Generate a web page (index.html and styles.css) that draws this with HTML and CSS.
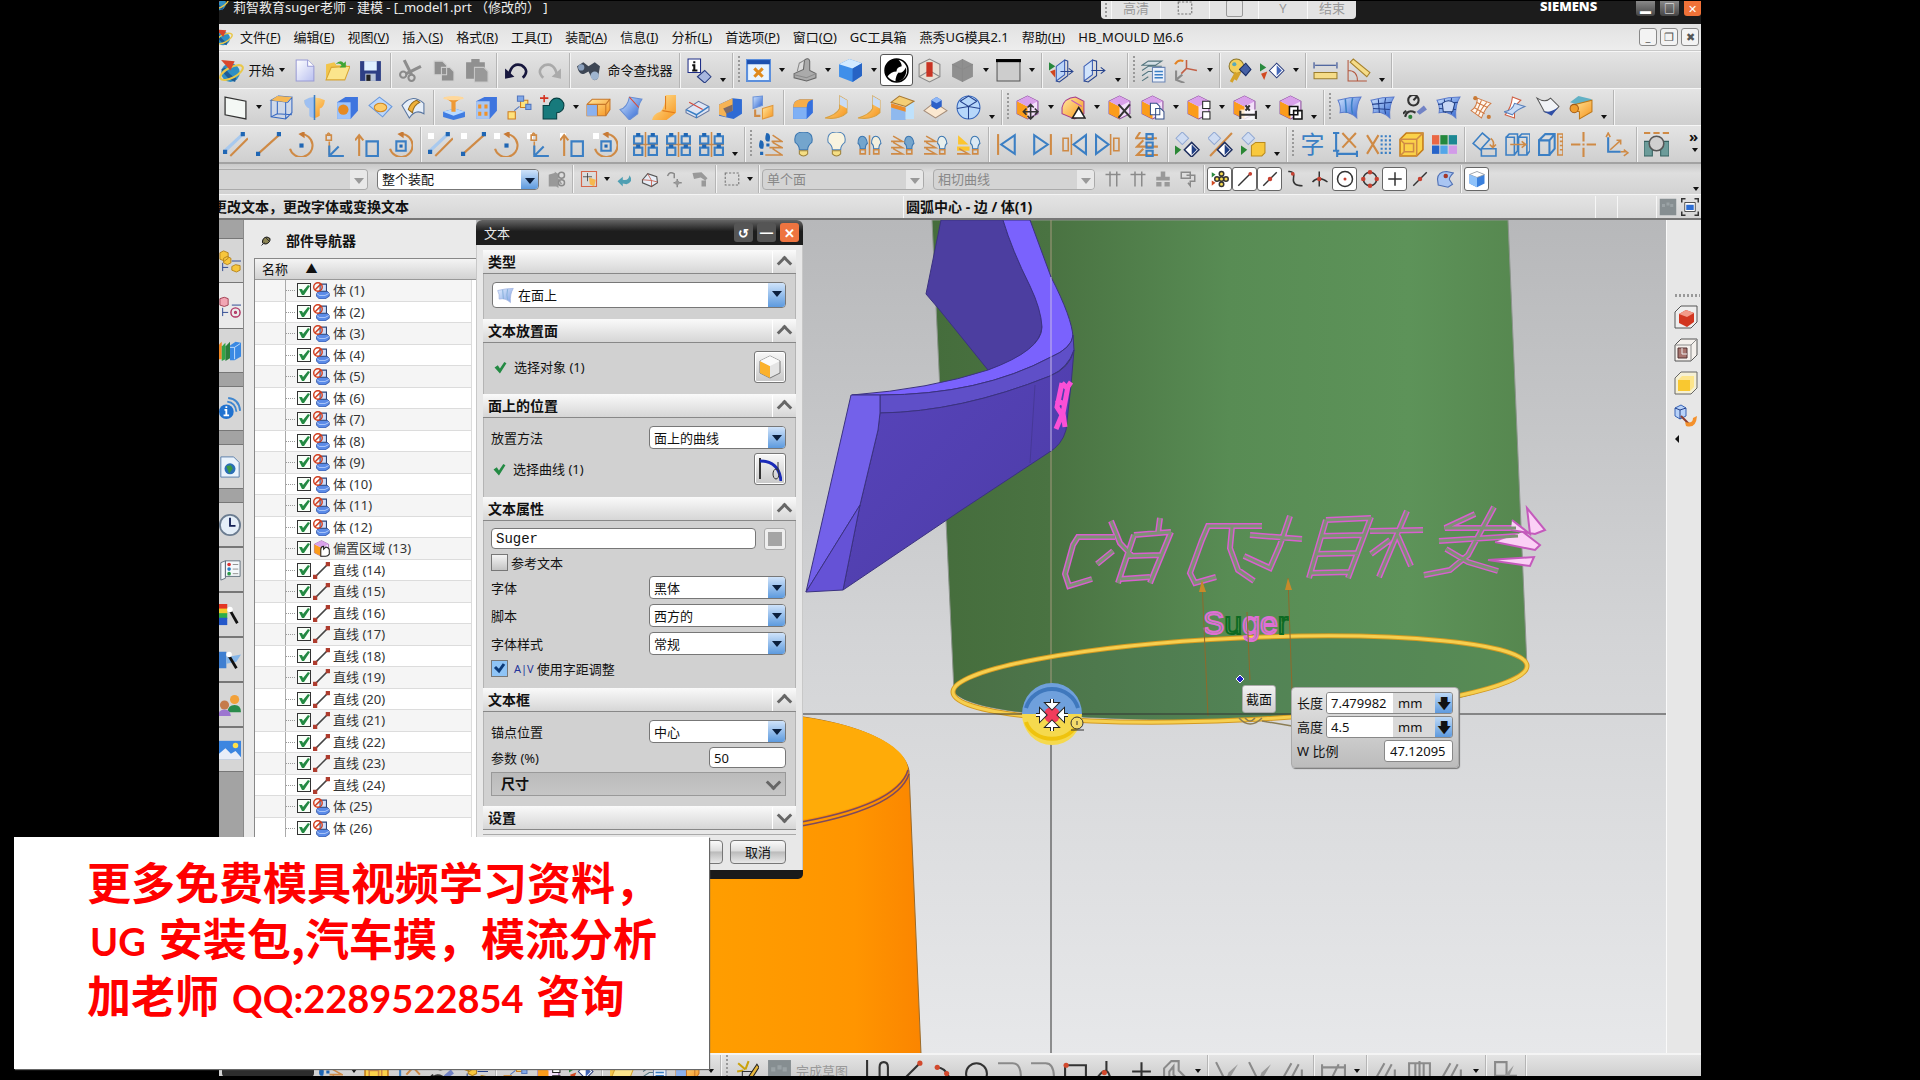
FILE: index.html
```html
<!DOCTYPE html>
<html lang="zh-CN">
<head>
<meta charset="utf-8">
<title>建模 - [_model1.prt]</title>
<link rel="stylesheet" href="styles.css">
</head>
<body>
<svg class="sprite" aria-hidden="true">
  <defs>
    <linearGradient id="gb" x1="0" y1="0" x2="1" y2="1"><stop offset="0" stop-color="#cfe4ff"/><stop offset="1" stop-color="#2a62d0"/></linearGradient>
    <linearGradient id="go" x1="0" y1="0" x2="1" y2="1"><stop offset="0" stop-color="#ffe9a0"/><stop offset="1" stop-color="#f7941d"/></linearGradient>
    <linearGradient id="gp" x1="0" y1="0" x2="1" y2="1"><stop offset="0" stop-color="#fff"/><stop offset="1" stop-color="#b9c0f0"/></linearGradient>
  </defs>
  <symbol id="nx" viewBox="0 0 24 24"><circle cx="11" cy="14" r="9" fill="#2f8fc4"/><path d="M4 10q5 9 12 11" stroke="#1d5c96" stroke-width="4" fill="none"/><ellipse cx="12" cy="14" rx="12" ry="5" transform="rotate(-28 12 14)" class="y"/><path d="M2 2l13 1-4 9z" fill="#d9452b"/></symbol>
  <symbol id="new" viewBox="0 0 24 24"><path d="M4 2h11l6 6v14H4z" fill="url(#gp)" stroke="#9a9cd6"/><path d="M15 2v6h6" fill="#fff" stroke="#9a9cd6"/></symbol>
  <symbol id="open" viewBox="0 0 24 24"><path d="M1 21V6l8-2 2 3h10v3z" fill="#f2c54a"/><path d="M1 21l5-12 18-1-5 13z" fill="#fbe58c" stroke="#d8a432"/><path d="M10 6q5-5 8-1l2-2v6h-6l2-2q-2-3-6-1z" fill="#3fa535"/></symbol>
  <symbol id="save" viewBox="0 0 24 24"><path d="M2 3h20v19H2z" fill="#2d3f85"/><path d="M6 3h12v9H6z" fill="#dff0ff"/><path d="M7 15h10v7H7z" fill="#b8c4d8"/><path d="M8 16h4v6H8z" fill="#222"/></symbol>
  <symbol id="cut" viewBox="0 0 24 24"><path d="M6 2l7 14M22 8L8 15" stroke="#8d8d8d" stroke-width="3"/><circle cx="5" cy="16" r="3" class="g w2"/><circle cx="13" cy="19" r="3" class="g w2"/></symbol>
  <symbol id="copy" viewBox="0 0 24 24"><path d="M3 3h8l4 4v9H3zM10 9h8l4 4v9H10z" fill="#8f8f8f" stroke="#cfcfcf"/></symbol>
  <symbol id="paste" viewBox="0 0 24 24"><path d="M2 4h5V1h8v3h5v16H2z" fill="#909090"/><path d="M10 9h9l4 4v10H10z" fill="#999" stroke="#c8c8c8"/></symbol>
  <symbol id="undo" viewBox="0 0 24 24"><path d="M5 15Q8 4 17 7q8 5 1 12" fill="none" stroke="#17173d" stroke-width="2.5"/><path d="M1 10v10l9-2z" fill="#17173d"/></symbol>
  <symbol id="redo" viewBox="0 0 24 24"><path d="M19 15Q16 4 7 7q-8 5-1 12" fill="none" stroke="#aaa" stroke-width="2.5"/><path d="M23 10v10l-9-2z" fill="#aaa"/></symbol>
  <symbol id="find" viewBox="0 0 24 24"><path d="M1 8l6-4 5 4 6-4 5 4-2 12q-4 3-6-1l-3-6-4 2q-5 2-7-7z" fill="#3d4654"/><circle cx="5" cy="9" r="3" fill="#8ba0bd"/><circle cx="18" cy="17" r="4" fill="#9fb5cf"/></symbol>
  <symbol id="info" viewBox="0 0 24 24"><path d="M1 1h12v13H1z" fill="#fff" stroke="#1d2c86"/><path d="M7 3v2M5 7h2v5M5 12h5" stroke="#111" stroke-width="2" fill="none"/><path d="M10 18l7-6 6 6-6 6z" fill="#a9b8df" stroke="#253a80"/></symbol>
  <symbol id="fit" viewBox="0 0 24 24"><path d="M1 2h22v20H1z" fill="#e8f3ff" stroke="#5c8fdc" stroke-width="2"/><path d="M1 2h22v4H1z" fill="#1d4fae"/><path d="M8 10l8 8M16 10l-8 8" stroke="#e08a1d" stroke-width="3"/></symbol>
  <symbol id="wire" viewBox="0 0 24 24"><path d="M2 15l9-4 1-9q4-3 5 1v9l6 3v4l-9 3-12-3z" fill="#aaa" stroke="#666"/><path d="M2 16l12 3 9-4M5 13l2-8 5-3" class="g"/></symbol>
  <symbol id="cube" viewBox="0 0 24 24"><path d="M1 6l10-5 12 4v12l-9 6L1 18z" fill="#3f8fea"/><path d="M1 6l10-5 12 4-9 5z" fill="#d3eaff"/><path d="M14 10l9-5v12l-9 6z" fill="#2763c4"/></symbol>
  <symbol id="graycube" viewBox="0 0 24 24"><path d="M2 6l10-5 10 5v12l-10 5-10-5z" fill="#8f8f8f"/><path d="M2 6l10 5 10-5M12 1v22" class="g"/></symbol>
  <symbol id="redbar" viewBox="0 0 24 24"><path d="M2 6l10-5 10 5v12l-10 5-10-5z" fill="#e6e0d4" stroke="#888"/><path d="M2 18l10-6 10 6" class="g"/><path d="M9 4h6v14H9z" fill="#c93421"/></symbol>
  <symbol id="shade" viewBox="0 0 24 24"><circle cx="12" cy="12" r="11" fill="#fff" stroke="#000" stroke-width="1.5"/><path d="M13 1A11 11 0 0 0 3 18q4-5 9-5 0-4 5-5 0-4-4-7zM11 23q0-6 3-9 4 1 7-5a11 11 0 0 1-10 14z"/></symbol>
  <symbol id="frame" viewBox="0 0 24 24"><path d="M1 2h22v20H1z" fill="#cdcdcd" stroke="#555"/><path d="M0 1h24v3H0z"/></symbol>
  <symbol id="sect" viewBox="0 0 24 24"><path d="M7 8l8-6v14l-8 6z" fill="#bcd6fa" stroke="#3b5db4"/><path d="M15 2l3 1v14l-8 6-3-1M11 13h11M19 10l4 3-4 3" class="bk"/><path d="M0 4l6 4-6 4z" fill="#27873d"/><path d="M1 13l5-2v8z" fill="#d2451e"/></symbol>
  <symbol id="sect2" viewBox="0 0 24 24"><path d="M2 8l8-6v14l-8 6z" fill="#d2e4fb" stroke="#3b5db4"/><path d="M10 2l4 1v14l-8 6-4-1M9 12h12M18 9l4 3-4 3" class="bk"/></symbol>
  <symbol id="layers" viewBox="0 0 24 24"><path d="M1 7l6-4h13l-6 4zM1 12l6-4h13M1 17l6-4h13M1 22l6-4" fill="#d5e0e6" stroke="#54757e"/><path d="M11 9h12v14H11z" fill="#e9f0fb" stroke="#6c86b5"/><path d="M13 13h8M13 16h8M13 19h8" class="b"/></symbol>
  <symbol id="csys" viewBox="0 0 24 24"><path d="M12 2v8l10 2M12 10l-5 5" stroke="#c25f45" fill="none" stroke-width="1.5"/><path d="M2 12v9l8 3M2 21l6-5" class="g w2"/><path d="M1 6q3-5 8-3" stroke="#e38324" stroke-width="2" fill="none"/></symbol>
  <symbol id="key" viewBox="0 0 24 24"><circle cx="9" cy="8" r="7" fill="#f3cf5c" stroke="#8d762a"/><circle cx="7" cy="6" r="2" fill="#58a9bc"/><path d="M9 14l-5 9M12 14l-4 7" stroke="#d5a32a" stroke-width="3"/><path d="M12 11l6-6 5 6-5 6z" fill="#4661a5" stroke="#182e67"/></symbol>
  <symbol id="disp" viewBox="0 0 24 24"><path d="M0 5l6 4-6 4z" fill="#298a3e"/><path d="M1 15l6-2-3 8z" fill="#d14a22"/><path d="M9 12l7-7 7 7-7 7z" fill="#fff" stroke="#26397b"/><path d="M16 7v10l5-5z" fill="#4468bb"/></symbol>
  <symbol id="ruler" viewBox="0 0 24 24"><path d="M1 14h22v6H1z" fill="#f5dc88" stroke="#9a7d2d"/><path d="M1 4v6M23 4v6M2 7h20" class="bk"/></symbol>
  <symbol id="angle" viewBox="0 0 24 24"><path d="M2 2v20h18M2 12q9 0 9 10" stroke="#b3563d" fill="none"/><path d="M4 4l3-3 16 13-3 4z" fill="#f5dc88" stroke="#a5812c"/></symbol>
  <symbol id="plane" viewBox="0 0 24 24"><path d="M2 2l20 4v17L2 19z" fill="#f4f8f5" stroke="#333" stroke-width="1.2"/></symbol>
  <symbol id="extr" viewBox="0 0 24 24"><path d="M2 5l7-4 13 1-4 5zM2 5v16l14 2 6-6V2M16 7v16M8 3v15l14 1M2 21l6-3" fill="#c5d8f8" fill-opacity=".5" stroke="#3567c0"/><path d="M2 5l6-4 14 1-5 5z" fill="#f7b955"/></symbol>
  <symbol id="rev" viewBox="0 0 24 24"><path d="M2 5q10-5 20 0-1 7-5 8v7q-5 4-9 0v-7q-6-2-6-8z" fill="url(#go)"/><path d="M2 5q5-3 10-3v20q-4 0-5-2v-7q-5-2-5-8z" fill="#9ec0f2"/><path d="M12 0v24" class="b"/></symbol>
  <symbol id="hole" viewBox="0 0 24 24"><path d="M2 7l8-5h12v13l-7 8H2z" fill="#3e75df"/><path d="M2 7h13v16H2z" fill="#9dc3fb"/><circle cx="8" cy="14" r="5" fill="#e58a23"/></symbol>
  <symbol id="face" viewBox="0 0 24 24"><path d="M1 10l10-8 12 9-9 10z" fill="#bcd7fb" stroke="#6b99db"/><ellipse cx="12" cy="12" rx="6" ry="4" fill="#fccb69" stroke="#d08722"/></symbol>
  <symbol id="thick" viewBox="0 0 24 24"><path d="M1 10Q10-2 22 8v10q-8-5-14 4z" fill="#e6eef8" stroke="#58749e"/><path d="M7 14q2-7 8-9l3 2q-6 3-7 10z" fill="#f0b13a" stroke="#91691d"/></symbol>
  <symbol id="boss" viewBox="0 0 24 24"><path d="M2 16l11-3 10 3v5l-11 3-10-3z" fill="#3f7ce2"/><path d="M2 16l11-3 10 3-11 4z" fill="#b9daff"/><path d="M3 2h18l-7 5v9h-4V7z" fill="#ee9936"/><ellipse cx="12" cy="3" rx="10" ry="2" fill="#ffd89b"/></symbol>
  <symbol id="pat" viewBox="0 0 24 24"><path d="M2 6l8-4h12v13l-7 8H2z" fill="#3e75df"/><path d="M2 6h13v17H2z" fill="#a9c6f1"/><path d="M4 9h3v4H4zM10 9h3v4h-3zM4 16h3v4H4zM10 16h3v4h-3z" fill="#f09229"/></symbol>
  <symbol id="parr" viewBox="0 0 24 24"><path d="M1 16h7v7H1zM13 5h7v7h-7z" fill="#ffe27c" stroke="#cd7c1e"/><path d="M7 15l5-4M10 1h6v5h-6zM18 9h5v5h-5z" fill="#80a8e8" stroke="#5477be"/></symbol>
  <symbol id="unite" viewBox="0 0 24 24"><path d="M3 10h6a7 7 0 1 1 7 7v6H3z" fill="#177a7c" stroke="#063f42"/><path d="M0 3h8M4 0v7" stroke="#d43220" stroke-width="1.5"/></symbol>
  <symbol id="box2" viewBox="0 0 24 24"><path d="M1 9l5-5h17v10l-4 6H1z" fill="url(#go)" stroke="#c7772a"/><path d="M1 9h10v11H1z" fill="#8bb1ee"/><path d="M19 9v11M1 9h18l4-5M11 9v11" stroke="#c7772a" fill="none"/></symbol>
  <symbol id="sheet" viewBox="0 0 24 24"><path d="M1 14q7-2 9-12l12 2q-4 6-4 14l-8 6z" fill="url(#gb)" stroke="#688ed3"/><path d="M10 2l9 10" stroke="#e0462d"/></symbol>
  <symbol id="drft" viewBox="0 0 24 24"><path d="M13 0h10v17l-9 7H0q1-6 8-8 5-4 5-16z" fill="url(#go)"/><path d="M10 15l12 2M13 1v13" stroke="#e07b1b" fill="none"/></symbol>
  <symbol id="slab" viewBox="0 0 24 24"><path d="M1 14l12-8 10 5v4l-12 7-10-5z" fill="#dfe6f5" stroke="#6376a1"/><path d="M1 14l10 5 12-8M11 19v3" class="b"/><path d="M4 7l13 7" stroke="#d4473a"/></symbol>
  <symbol id="open2" viewBox="0 0 24 24"><path d="M1 9l13-6 9 1v14l-8 5-14-3z" fill="#2f6bd4"/><path d="M1 9l13-6v12l-6 2v4l-7-2z" fill="#f5b355"/><path d="M5 13l9-4v6l-6 3z" fill="#7c6a68"/></symbol>
  <symbol id="move2" viewBox="0 0 24 24"><path d="M2 2l9-1v9l-9 3z" fill="url(#gb)" stroke="#6c93d8"/><path d="M11 13l10-3v10l-10 3z" fill="url(#go)" stroke="#e19739"/><path d="M4 14v6h5" class="o w2"/></symbol>
  <symbol id="blend" viewBox="0 0 24 24"><path d="M2 12q0-7 7-8h12v13l-6 6H2z" fill="#3570de"/><path d="M2 12q0-7 7-8h13q-7 1-7 8z" fill="#f7ad48"/><path d="M2 12h13v11H2z" fill="#7fb0f5"/></symbol>
  <symbol id="curl" viewBox="0 0 24 24"><path d="M15 1l7 4v12q-7 7-21 5 11-3 14-9z" fill="url(#go)" stroke="#d9a03f"/><path d="M15 1l7 4v8l-7-4z" fill="#c9dcf6"/></symbol>
  <symbol id="chamf" viewBox="0 0 24 24"><path d="M1 12h14v12H1z" fill="#8fb9ee"/><path d="M1 7l8-6 14 5v17h-8V12z" fill="#bfe1fb"/><path d="M1 7l8-6 14 5-8 5z" fill="#f4ce75" stroke="#a97832"/><path d="M1 8l14 4v4L1 12z" fill="#ed8c28"/></symbol>
  <symbol id="pyr" viewBox="0 0 24 24"><path d="M1 15l10-8 12 8-11 7z" fill="#fbe8d0" stroke="#a58d7a"/><path d="M8 5l5-3 5 3v6l-5 3-5-3z" fill="#2c60c8"/><path d="M8 5l5-3 5 3-5 3z" fill="#8fb8f7"/></symbol>
  <symbol id="gem" viewBox="0 0 24 24"><circle cx="12" cy="12" r="11" fill="#b7d7fa" stroke="#3364bb"/><path d="M4 6l8 5 8-5M12 11v12M1 13l11-2 11 2M4 6l8-5 8 5" class="bk"/></symbol>
  <symbol id="dcube" viewBox="0 0 24 24"><path d="M2 6l10-5 10 5v12l-10 5-10-5z" fill="#f3e0fa" stroke="#8a4a9c"/><path d="M2 6l10 5v12L2 18z" fill="#fb9c1b"/><path d="M2 6l10-5 10 5-10 5z" fill="#d9a1ea"/></symbol>
  <symbol id="d1" viewBox="0 0 24 24"><use href="#dcube"/><path d="M15 9v14M8 16h14M12 12l3-3 3 3M12 20l3 3 3-3M11 13l-3 3 3 3M19 13l3 3-3 3" stroke="#333" fill="none" stroke-width="1.5"/></symbol>
  <symbol id="d2" viewBox="0 0 24 24"><path d="M1 12Q3 3 14 2l8 4v12l-9 5-12-5z" fill="url(#go)" stroke="#a83d8a"/><path d="M10 5l10 6" stroke="#c15bb8"/><path d="M17 12l6 10H11z" fill="#fff" stroke="#222" stroke-width="1.5"/></symbol>
  <symbol id="d3" viewBox="0 0 24 24"><use href="#dcube"/><path d="M11 9l12 13M22 9L11 22" stroke="#333" stroke-width="2"/></symbol>
  <symbol id="d4" viewBox="0 0 24 24"><use href="#dcube"/><path d="M10 8h6l3 3v8h-9zM15 13h5l3 3v7h-8z" fill="#fff" stroke="#375189"/></symbol>
  <symbol id="d5" viewBox="0 0 24 24"><use href="#dcube"/><path d="M16 6h7v7h-7zM16 16h7v7h-7z" fill="#fff" stroke="#222"/></symbol>
  <symbol id="d6" viewBox="0 0 24 24"><use href="#dcube"/><path d="M8 14h15v10H8z" fill="#fff" fill-opacity=".8"/><path d="M8 15v8M23 15v8M9 19h13M13 10l4 5M17 10l-4 5" class="k w2"/></symbol>
  <symbol id="d7" viewBox="0 0 24 24"><use href="#dcube"/><path d="M11 11h8v8h-8zM15 15h8v8h-8z" fill="#fff" stroke="#111" stroke-width="1.5"/></symbol>
  <symbol id="surf" viewBox="0 0 24 24"><path d="M1 5q11-3 22-3-5 8-4 20-7-7-16-5 1-6-2-12z" fill="url(#gb)" stroke="#5d7ccc"/><path d="M8 4l1 13M15 3q-2 8 0 15" class="b"/></symbol>
  <symbol id="surf2" viewBox="0 0 24 24"><path d="M1 5q11-3 22-3-5 8-4 20-7-7-16-5 1-6-2-12z" fill="url(#gb)" stroke="#5d7ccc"/><path d="M8 4l1 13M15 3q-2 8 0 15M2 9l19-2M3 13l16 1" class="bk"/></symbol>
  <symbol id="tools" viewBox="0 0 24 24"><circle cx="10" cy="5" r="5" class="k w2"/><path d="M10 5l4-4M2 21q2-8 10-4M3 15l-3 3" class="k w2"/><path d="M13 16l7-6 3 4-7 5z" fill="#7283c5"/><circle cx="7" cy="21" r="2" fill="#2c813b"/></symbol>
  <symbol id="surf3" viewBox="0 0 24 24"><use href="#surf2"/><path d="M6 8q6-5 12 0l-2 8H7z" fill="#c8d8f5" stroke="#213f80"/></symbol>
  <symbol id="mesh" viewBox="0 0 24 24"><path d="M8 3l13 5q-6 5-9 14L2 15q6-4 6-12z" fill="#fff8ef" stroke="#d17b45"/><path d="M12 5Q8 15 6 18M17 7q-6 7-8 13M7 7l11 5M5 12l10 6" stroke="#d17b45" fill="none"/><circle cx="6" cy="3" r="2" class="fo"/><circle cx="19" cy="21" r="2" class="fo"/></symbol>
  <symbol id="fold" viewBox="0 0 24 24"><path d="M10 2l8 3q-7 5-6 17l-9-3Q9 12 10 2z" fill="#fff" stroke="#d05e42"/><path d="M2 16q8-1 10-8l10 3q-8 3-12 8z" fill="#cadcf5" stroke="#577fba"/></symbol>
  <symbol id="flag" viewBox="0 0 24 24"><path d="M2 3q8 5 13 0l8 8q-6 8-14 5z" fill="#f1f3f6" stroke="#555"/><path d="M7 15l9 5 6-8q-8 6-15 3z" fill="#304fa6"/></symbol>
  <symbol id="roll" viewBox="0 0 24 24"><path d="M2 7l8-6 13 3-8 7z" fill="#62b1c5"/><path d="M3 10l20-5v11l-12 7v-7l-6-1z" fill="url(#go)" stroke="#be7817"/><circle cx="6" cy="13" r="4" fill="#ef9e2f" stroke="#a45b15"/></symbol>
  <symbol id="l1" viewBox="0 0 24 24"><path d="M2 18L19 2" stroke="#a8c9ee" stroke-width="3"/><path d="M7 23L24 6" class="o w2"/><path d="M0 17h4v4H0zM17 0h4v4h-4z" class="fb"/></symbol>
  <symbol id="l2" viewBox="0 0 24 24"><path d="M2 21L22 3" class="o w2"/><path d="M0 19h4v4H0zM20 0h4v4h-4z" class="fb"/></symbol>
  <symbol id="l3" viewBox="0 0 24 24"><path d="M11 2a11 11 0 1 1-10 14" class="o w2"/><path d="M9 2l6-3v7z" class="fo"/><path d="M10 11h4v4h-4z" class="fb"/></symbol>
  <symbol id="l4" viewBox="0 0 24 24"><path d="M4 3h5v5H4zM5 3q1-4 3 0M7 9v13" class="o"/><path d="M7 13v10h14M7 23l9-9" class="b w2"/></symbol>
  <symbol id="l5" viewBox="0 0 24 24"><path d="M4 23V4M0 8l4-5 4 5" class="o w2"/><path d="M11 9h11v14H11z" class="b w2"/></symbol>
  <symbol id="l6" viewBox="0 0 24 24"><path d="M13 2a11 11 0 1 1-11 14" class="o w2"/><path d="M9 2l6-3v7z" class="fo"/><path d="M8 9h9v9H8z" class="b w2"/><path d="M11 12h3v3h-3z" class="fb"/></symbol>
  <symbol id="grid4" viewBox="0 0 24 24"><path d="M12 0v24M0 12h24" class="o"/><path d="M1 4h8v7H1zM15 4h8v7h-8zM1 15h8v7H1zM15 15h8v7h-8z" class="b w2"/><path d="M3 1h4v3H3zM17 1h4v3h-4zM3 12h4v3H3zM17 12h4v3h-4z" class="fb"/></symbol>
  <symbol id="steps" viewBox="0 0 24 24"><path d="M14 3l9 6H13M14 10l9 5H11M14 16l9 6H7" class="o"/><path d="M8 1q5 0 3 8-6 1-3-8zM2 8q5 0 3 8-6 1-3-8zM8 11h3v3H8zM2 19h3v3H2z" class="fb"/></symbol>
  <symbol id="bulb" viewBox="0 0 24 24"><path d="M8 17q0-4-4-7-2-10 8-10t8 10q-4 3-4 7z" fill="#74a5cd" stroke="#3b76b0"/><path d="M8 18h8v3q-4 4-8 0z" fill="#f5de84" stroke="#9c813a"/></symbol>
  <symbol id="bulbl" viewBox="0 0 24 24"><path d="M8 17q0-4-4-7-2-10 8-10t8 10q-4 3-4 7z" fill="#f8f3df" stroke="#4e82b8"/><path d="M8 18h8v3q-4 4-8 0z" fill="#f5de84" stroke="#9c813a"/></symbol>
  <symbol id="bulb2" viewBox="0 0 24 24"><path d="M3 16q0-4-2-5 0-7 4-7t5 7q-2 1-2 5z" fill="#74a5cd" stroke="#3b76b0"/><path d="M16 16q0-4-2-5 0-7 4-7t5 7q-2 1-2 5z" fill="#f3efdd" stroke="#3b76b0"/><path d="M12 3v19M3 17h5v4H3zM16 17h5v4h-5z" class="o"/></symbol>
  <symbol id="bulb3" viewBox="0 0 24 24"><path d="M16 16q0-4-2-5 0-7 4-7t5 7q-2 1-2 5z" fill="#74a5cd" stroke="#3b76b0"/><path d="M3 4l9 5H1M3 10l9 5H1M3 16l9 5H1M16 17h5v4h-5z" class="o"/></symbol>
  <symbol id="bulb4" viewBox="0 0 24 24"><path d="M16 16q0-4-2-5 0-7 4-7t5 7q-2 1-2 5z" fill="#e8f0ee" stroke="#3b76b0"/><path d="M3 4l9 5H1M3 10l9 5H1M3 16l9 5H1M16 17h5v4h-5z" class="o"/></symbol>
  <symbol id="bulb5" viewBox="0 0 24 24"><path d="M2 3l10 9H2M1 14h12v4H1z" fill="#fcc52f"/><path d="M16 16q0-4-2-5 0-7 4-7t5 7q-2 1-2 5z" fill="#dbe9f4" stroke="#3b76b0"/><path d="M3 16l9 5H1M16 17h5v4h-5z" class="o"/></symbol>
  <symbol id="first" viewBox="0 0 24 24"><path d="M2 2v20" class="o w2"/><path d="M18 3v18L5 12z" class="b w2"/></symbol>
  <symbol id="last" viewBox="0 0 24 24"><path d="M21 2v20" class="o w2"/><path d="M5 3v18l13-9z" class="b w2"/></symbol>
  <symbol id="pfirst" viewBox="0 0 24 24"><path d="M1 6h5v12H1zM9 2v20" class="o"/><path d="M23 3v18l-12-9z" class="b w2"/></symbol>
  <symbol id="plast" viewBox="0 0 24 24"><path d="M18 6h5v12h-5zM15 2v20" class="o"/><path d="M1 3v18l12-9z" class="b w2"/></symbol>
  <symbol id="order" viewBox="0 0 24 24"><path d="M5 0L1 6h20M8 8l-6 6h20M8 16l-6 6h20" class="o w2"/><path d="M11 2h6v5h-6zM11 10h6v5h-6zM11 18h6v5h-6z" class="b w2"/></symbol>
  <symbol id="dia1" viewBox="0 0 24 24"><path d="M1 6l6-6 6 6-6 6z" fill="#cfdcf2" stroke="#8fa7d2"/><path d="M0 13l6 4-6 5z" fill="#2b8735"/><path d="M9 17l7-7 7 7-7 7z" fill="#fff" stroke="#203060" stroke-width="1.5"/><path d="M16 12v10l5-5z" fill="#203e84"/></symbol>
  <symbol id="dia2" viewBox="0 0 24 24"><path d="M0 6l6-6 6 6-6 6z" fill="#cfdcf2" stroke="#8fa7d2"/><path d="M2 23L23 1" class="o w2"/><path d="M9 17l7-7 7 7-7 7z" fill="#fff" stroke="#203060" stroke-width="1.5"/><path d="M16 12v10l5-5z" fill="#203e84"/></symbol>
  <symbol id="dia3" viewBox="0 0 24 24"><path d="M1 6l6-6 6 6-6 6z" fill="#cfdcf2" stroke="#8fa7d2"/><path d="M0 13l6 4-6 5z" fill="#2b8735"/><path d="M10 13l4-3h9v10l-3 3H10z" fill="#f8c83d" stroke="#b98a1c"/></symbol>
  <symbol id="dimx" viewBox="0 0 24 24"><path d="M9 1l13 14M22 1L9 15" class="o w2"/><path d="M3 1v17M0 1h6M0 18h6M4 21h20M4 18v6M23 18v6" class="b w2"/></symbol>
  <symbol id="xbar" viewBox="0 0 24 24"><path d="M1 3l11 18M12 3L1 21" class="o w2"/><path d="M15 3v18M19 3v18M23 3v18" class="b w2" stroke-dasharray="2 2"/></symbol>
  <symbol id="ybox" viewBox="0 0 24 24"><path d="M1 7l6-6h16v16l-6 6H1z" fill="#fbd24a" stroke="#c57c18" stroke-width="1.5"/><path d="M1 7h16v16M17 7l6-6M5 11h9v8H5zM1 7l4 4M1 23l4-4" class="o"/></symbol>
  <symbol id="pal" viewBox="0 0 24 24"><path d="M0 3h7v9H0z" fill="#ea6744"/><path d="M8 3h7v9H8z" fill="#24883d"/><path d="M16 3h8v9h-8z" fill="#1c8893"/><path d="M0 13h7v8H0z" fill="#2864c9"/><path d="M8 13h7v8H8z" fill="#53a6e8"/><path d="M16 13h8v8h-8z" fill="#d29be8"/></symbol>
  <symbol id="rot" viewBox="0 0 24 24"><path d="M1 11l9-10 7 6-9 10zM9 16h14v7H9z" class="b"/><path d="M18 6q4 3 2 8M17 12l3 3 3-3" class="o"/></symbol>
  <symbol id="cc" viewBox="0 0 24 24"><path d="M1 5h8v17H1zM1 5l3-3h8v16l-3 4M13 5h8v17h-8zM13 5l3-3h8v16l-3 4" class="b"/><path d="M5 12h14M16 9l4 3-4 3" class="o"/></symbol>
  <symbol id="cr" viewBox="0 0 24 24"><path d="M1 8h10v14H1zM1 8l6-6h9v14l-5 6M11 8l5-6" class="b w2"/><path d="M19 2h5v20h-5zM21 5h3M21 9h3M21 13h3M21 17h3" class="o"/></symbol>
  <symbol id="cross" viewBox="0 0 24 24"><path d="M12 0v9M12 15v9M0 12h9M15 12h9M11 12h2" class="o w2"/></symbol>
  <symbol id="axes" viewBox="0 0 24 24"><path d="M4 5v14h12" class="b w2"/><path d="M2 5l2-4 2 4M19 17l4 3-4 3M16 19h6M6 17l10-9M12 8h4v4" class="o"/></symbol>
  <symbol id="ring" viewBox="0 0 24 24"><path d="M0 9h8v14H0zM16 9h8v14h-8z" fill="#6c9c9a" stroke="#34605f"/><circle cx="12" cy="11" r="7" fill="#cfcfcf" stroke="#555" stroke-width="1.5"/><path d="M0 1h6M9 1h6M18 1h6" class="o w2"/></symbol>
  <symbol id="snapx" viewBox="0 0 24 24"><path d="M2 2h20v20H2z" fill="none" stroke="#d6664a" stroke-width="1.5"/><path d="M10 4v11M4 9h12" class="k"/><path d="M12 10l9 3-2 9-6-3z" fill="#f6b84f"/></symbol>
  <symbol id="back" viewBox="0 0 24 24"><path d="M2 15l7-6v4q8 2 9-6 6 8-4 12l-5-1v4z" fill="#4f9fb3"/></symbol>
  <symbol id="house" viewBox="0 0 24 24"><path d="M2 13l7-8 12 4 1 8-8 5-12-5z" fill="#e7edf6" stroke="#555" stroke-width="1.5"/><path d="M9 5l5 9 8 2M2 13l12 1v8" stroke="#c14b37" fill="none"/></symbol>
  <symbol id="gtool" viewBox="0 0 24 24"><path d="M2 8q3-7 9-3v6M15 12v11M10 17h11" class="g w2"/><circle cx="15" cy="17" r="3" fill="#999"/></symbol>
  <symbol id="gham" viewBox="0 0 24 24"><path d="M2 4l12-1 8 8-3 3-6-4-9 2zM14 14h6v8h-6z" fill="#999"/></symbol>
  <symbol id="dash" viewBox="0 0 24 24"><path d="M3 4h18v16H3z" fill="none" stroke="#777" stroke-width="1.5" stroke-dasharray="3 2"/></symbol>
  <symbol id="gwrench" viewBox="0 0 24 24"><path d="M2 7l7-2v16H2zM10 4l3 2v16l-3-2zM14 12l4 7" fill="#999" stroke="#999" stroke-width="2"/><circle cx="18" cy="7" r="4" class="g w2"/><circle cx="18" cy="17" r="4" class="g w2"/></symbol>
  <symbol id="hh" viewBox="0 0 24 24"><path d="M2 6h20M8 2v20M17 2v20" class="g w2"/></symbol>
  <symbol id="stamp" viewBox="0 0 24 24"><path d="M9 2h6v7h6v5H3V9h6zM3 16h7v6H3zM14 16h7v6h-7z" fill="#999"/></symbol>
  <symbol id="gdown" viewBox="0 0 24 24"><path d="M3 3h12v8H3zM10 7h11v8h-6v6l-3-4" class="g w2"/></symbol>
  <symbol id="flow" viewBox="0 0 24 24"><path d="M1 3l5 3-5 4z" fill="#298a3e"/><path d="M1 14l5 3-5 4z" fill="#d14a22"/><g fill="#f7dc4f" stroke="#333" stroke-width="2"><circle cx="14" cy="12" r="3"/><circle cx="14" cy="5" r="3"/><circle cx="14" cy="19" r="3"/><circle cx="8" cy="12" r="3"/><circle cx="20" cy="12" r="3"/></g></symbol>
  <symbol id="seg" viewBox="0 0 24 24"><path d="M3 21L20 4" class="k w2"/><circle cx="19" cy="5" r="2.500" fill="#c64131"/></symbol>
  <symbol id="mid" viewBox="0 0 24 24"><path d="M3 21L21 3" class="k w2"/><circle cx="12" cy="12" r="3" fill="#c64131"/></symbol>
  <symbol id="scurve" viewBox="0 0 24 24"><path d="M3 2q9-1 7 9t12 10" class="k w2"/><circle cx="9" cy="5" r="2.500" fill="#c64131"/></symbol>
  <symbol id="tee" viewBox="0 0 24 24"><path d="M2 16q8-9 20 0M11 2v20" class="k w2"/><circle cx="11" cy="12" r="3" fill="#c64131"/></symbol>
  <symbol id="ccen" viewBox="0 0 24 24"><circle cx="12" cy="12" r="10" class="k w2"/><circle cx="12" cy="12" r="2" fill="#c64131"/></symbol>
  <symbol id="cq" viewBox="0 0 24 24"><circle cx="12" cy="12" r="9" class="k w2"/><g fill="#c64131"><circle cx="12" cy="3" r="3"/><circle cx="12" cy="21" r="3"/><circle cx="3" cy="12" r="3"/><circle cx="21" cy="12" r="3"/></g></symbol>
  <symbol id="plus" viewBox="0 0 24 24"><path d="M12 3v18M3 12h18" class="k w2"/></symbol>
  <symbol id="psurf" viewBox="0 0 24 24"><path d="M2 12Q3 2 14 2l9 2q-6 6-5 9l4 6-6 4-13-3z" fill="#a9c5f2" stroke="#5071b5" stroke-width="1.5"/><circle cx="13" cy="8" r="3" fill="#a63829"/></symbol>
  <symbol id="pcube" viewBox="0 0 24 24"><path d="M2 6l10-4 10 4v12l-10 5-10-5z" fill="#3a80dd"/><path d="M2 6l10-4 10 4-10 4z" fill="#fff" stroke="#999"/><path d="M2 6l10 4v13L2 18z" fill="#8ec2fa"/></symbol>
  <symbol id="gbox" viewBox="0 0 24 24"><path d="M1 1h22v22H1z" fill="#868e91"/><path d="M4 8h4v4H4zM10 6h4v4h-4zM15 8h4v4h-4z" fill="#9aa2a5"/></symbol>
  <symbol id="full" viewBox="0 0 24 24"><path d="M1 6V1h5M18 1h5v5M23 18v5h-5M6 23H1v-5" class="k w2"/><path d="M5 6h14v12H5z" fill="#fff" stroke="#222"/><path d="M7 9h10v7H7z" fill="#2e6ed3"/></symbol>
  <symbol id="body" viewBox="0 0 24 24"><path d="M5 16l5-4h9l4 4v4l-6 4H9l-4-4z" fill="#5b8be8" stroke="#244596"/><path d="M5 16l4 3h8l6-3" stroke="#cfe0ff" fill="none"/><path d="M10 3h9v10h-9z" fill="#cfdffc" stroke="#2d4475" stroke-width="1.500"/><circle cx="7" cy="7" r="6" fill="none" stroke="#d13b1c" stroke-width="2"/><path d="M3 11l8-8" stroke="#d13b1c" stroke-width="2"/></symbol>
  <symbol id="region" viewBox="0 0 24 24"><use href="#dcube"/><path d="M11 14q0-5 4-5v4l3-3q5 1 5 4v6q-2 3-5 3h-7z" fill="#fff" stroke="#222" stroke-width="1.500"/></symbol>
  <symbol id="line" viewBox="0 0 24 24"><path d="M3 21L21 3" stroke="#444" stroke-width="2"/><path d="M0 18h6v6H0zM18 0h6v6h-6z" fill="#ae3c2e"/></symbol>
  <symbol id="pin" viewBox="0 0 24 24"><path d="M5 14q0-9 9-10l6 3q1 8-8 11l-6-1z" fill="#8c8554" stroke="#111" stroke-width="2"/><path d="M3 21l6-6M12 6l6 6" class="k w2"/></symbol>
  <symbol id="t1" viewBox="0 0 24 24"><path d="M1 3l4-2 5 2v6l-4 3-5-2zM5 9l4-2 4 2v5l-4 2-4-2zM14 18l4-2 5 1v5l-4 2-5-2z" fill="#f7c63c" stroke="#b5821d"/><path d="M4 14v9M4 19h6M14 12h10" class="bk"/></symbol>
  <symbol id="t2" viewBox="0 0 24 24"><path d="M1 4q5-3 9 0v7q-4 3-9 0z" fill="#f2a6b4" stroke="#9c3d50"/><path d="M4 14v9M4 19h6M14 11h10" class="bk"/><circle cx="18" cy="19" r="5" class="m"/><circle cx="18" cy="19" r="1" class="m"/></symbol>
  <symbol id="t3" viewBox="0 0 24 24"><path d="M0 5l3-3v19H0z" fill="#f08a28"/><path d="M3 7l4-4v18l-4 2z" fill="#34a447"/><path d="M7 7l5-5v18l-5 3z" fill="#2b7f3c"/><path d="M12 6l6-4 6 1v15l-7 4h-5z" fill="#3a89e3"/><path d="M12 8h5l6-4M17 8v13" stroke="#c8e2ff" fill="none"/></symbol>
  <symbol id="t4" viewBox="0 0 24 24"><circle cx="8" cy="15" r="8" fill="#2172cf"/><path d="M8 9v2M6 13h2v6M5 19h6" stroke="#fff" stroke-width="2" fill="none"/><path d="M9 4q9 1 10 11M10 0q12 1 13 14" stroke="#3f86cf" stroke-width="2" fill="none"/></symbol>
  <symbol id="t5" viewBox="0 0 24 24"><path d="M2 1h14l6 6v16H2z" fill="#eaf3fc" stroke="#547ba8"/><circle cx="12" cy="14" r="6" fill="#2a6fb6"/><path d="M8 11l5-1 2 4-4 5z" fill="#3a9a43"/></symbol>
  <symbol id="t6" viewBox="0 0 24 24"><circle cx="12" cy="12" r="11" fill="#e4eef8" stroke="#6b7c90" stroke-width="2"/><path d="M12 4v9h6" stroke="#111f55" stroke-width="2" fill="none"/></symbol>
  <symbol id="t7" viewBox="0 0 24 24"><path d="M2 4l5-2v19l-5 2zM7 2h16v17H7z" fill="#f4f8fb" stroke="#5f6e7c"/><circle cx="11" cy="6" r="2" fill="#d33"/><circle cx="11" cy="11" r="2" fill="#2a7ec4"/><circle cx="11" cy="16" r="2" fill="#2a9a4a"/><path d="M15 6h6M15 11h6M15 16h6" class="g"/></symbol>
  <symbol id="t8" viewBox="0 0 24 24"><path d="M0 0h9v6H0z" fill="#e33524"/><path d="M0 5h9v6H0z" fill="#f3cc2c"/><path d="M0 10h9v6H0z" fill="#2eae49"/><path d="M0 15h9v8H0z" fill="#2458ca"/><path d="M11 5l9 16" stroke="#111" stroke-width="3"/><circle cx="12" cy="6" r="3" fill="#fff"/></symbol>
  <symbol id="t9" viewBox="0 0 24 24"><path d="M0 3h8v18H0z" fill="#3f7fd1"/><path d="M8 9l16-3-5 8-11 2z" fill="#86b6e8"/><path d="M10 6l9 15" stroke="#111" stroke-width="3"/><circle cx="11" cy="6" r="3" fill="#fff"/></symbol>
  <symbol id="t10" viewBox="0 0 24 24"><circle cx="17" cy="6" r="5" fill="#f2a13a"/><path d="M9 20q1-8 8-8t7 8z" fill="#2a8b4b"/><circle cx="6" cy="12" r="5" fill="#c57b4b"/><path d="M-1 24q1-7 7-7t7 7z" fill="#9c76d0"/></symbol>
  <symbol id="t11" viewBox="0 0 24 24"><path d="M0 2h24v20H0z" fill="#3c86e0"/><circle cx="18" cy="7" r="3" fill="#ffe14a"/><path d="M0 22v-6l7-6 6 6 5-3 6 7v2z" fill="#e9eef8"/></symbol>
  <symbol id="r1" viewBox="0 0 24 24"><path d="M1 7l6-6h16v16l-6 6H1z" fill="#eee" stroke="#555"/><path d="M5 9l7-4 8 3v9l-7 5-8-4z" fill="#d23620"/><path d="M5 9l7-4 8 3-7 4z" fill="#f29a88"/></symbol>
  <symbol id="r2" viewBox="0 0 24 24"><path d="M1 7l6-6h16v16l-6 6H1z" fill="#f4f0ec" stroke="#555"/><path d="M1 7h16v16M17 7l6-6" class="g"/><path d="M4 10h9v10H4z" fill="#a8756e" stroke="#533"/><path d="M8 10v6h5" stroke="#eee" fill="none"/></symbol>
  <symbol id="r3" viewBox="0 0 24 24"><path d="M1 7l6-6h16v16l-6 6H1z" fill="#f5f0d5" stroke="#666"/><path d="M4 9h12v11H4z" fill="#f9c830"/><path d="M4 9l4-4h12l-4 4zM16 9l4-4v11l-4 4z" fill="#fde58c"/></symbol>
  <symbol id="r4" viewBox="0 0 24 24"><path d="M1 4l6-3 5 3v8l-6 3-5-3z" fill="#b8d2f8" stroke="#3863b5"/><path d="M1 4l5 2 6-2M6 6v9" class="bk"/><path d="M7 12l8 8" stroke="#8b3d2e" stroke-width="2"/><path d="M12 22q10 3 11-10l-4 2q0 6-8 4z" fill="#f4912c"/></symbol>
  <symbol id="facebtn" viewBox="0 0 24 24"><path d="M2 6l10-5 10 5v12l-10 5-10-5z" fill="#e4e4e4" stroke="#777"/><path d="M2 6l10 5v12L2 18z" fill="#fbb12b"/><path d="M2 6l10-5 10 5-10 5z" fill="#fafafa"/></symbol>
  <symbol id="curvebtn" viewBox="0 0 24 24"><path d="M2 1v21" class="k w2"/><path d="M2 4q19 0 21 20" fill="none" stroke="#1a2bb8" stroke-width="3"/><ellipse cx="18" cy="17" rx="3" ry="5" class="k"/><path d="M20 5v9" class="k"/></symbol>
  <symbol id="tick" viewBox="0 0 24 24"><path d="M1 12l6-4 4 6L19 2l4 2-12 19z" fill="#238a43"/></symbol>
  <symbol id="sk" viewBox="0 0 24 24"><path d="M4 4l7 6M3 12l6-1M14 2l-3 8" stroke="#caa20d" stroke-width="2"/><path d="M8 12h10v11H8z" class="k"/><path d="M22 5l-8 12-2 5 5-3 7-11z" fill="#e8b73b" stroke="#222"/></symbol>
  <symbol id="s1" viewBox="0 0 24 24"><path d="M2 1v22M14 23V8q0-5 4-5t4 5v15" class="k w2"/><path d="M0 18h4v5H0zM12 18h4v5h-4z" fill="#c8442c"/></symbol>
  <symbol id="s2" viewBox="0 0 24 24"><path d="M3 22L20 5" class="k w2"/><circle cx="21" cy="4" r="2.500" fill="#d2492d"/></symbol>
  <symbol id="s3" viewBox="0 0 24 24"><path d="M6 8q10 1 13 15" class="k w2"/><circle cx="6" cy="8" r="2.500" fill="#d2492d"/><circle cx="15" cy="14" r="2.500" fill="#d2492d"/></symbol>
  <symbol id="s4" viewBox="0 0 24 24"><circle cx="12" cy="14" r="10" class="k w2"/></symbol>
  <symbol id="s5" viewBox="0 0 24 24"><path d="M1 4h14q8 0 8 14v6" class="g w2"/></symbol>
  <symbol id="s6" viewBox="0 0 24 24"><path d="M2 6h20v17H2z" class="k w2"/><circle cx="3" cy="6" r="2.500" fill="#d2492d"/></symbol>
  <symbol id="s7" viewBox="0 0 24 24"><path d="M2 17q8-11 11-1t10 1M10 2v9" class="k w2"/><circle cx="8" cy="13" r="2.500" fill="#d2492d"/><circle cx="15" cy="20" r="2.500" fill="#d2492d"/></symbol>
  <symbol id="s8" viewBox="0 0 24 24"><path d="M2 24V9l7-7h7v9l7 7v6M7 24V12l4-5v8l5 5v4" class="g w2"/></symbol>
  <symbol id="s9" viewBox="0 0 24 24"><path d="M1 3l9 18h4" class="g w2"/><path d="M22 5l-7 12-5 4 3-8z" fill="#999"/></symbol>
  <symbol id="s10" viewBox="0 0 24 24"><path d="M1 5v14M23 5v14M1 8h22M17 5l-9 18" class="g w2"/></symbol>
  <symbol id="s11" viewBox="0 0 24 24"><path d="M1 20L10 4M8 22l9-17M20 10v12" class="g w2"/></symbol>
  <symbol id="s12" viewBox="0 0 24 24"><path d="M2 24V4h20v20M8 4v14h8V4M12 2v16" class="g w2"/></symbol>
  <symbol id="s13" viewBox="0 0 24 24"><path d="M2 3h11v13H2zM10 16h12v8H10z" class="g w2"/><path d="M20 6l-6 14-3-4z" fill="#999"/></symbol>
</svg>

<div class="app">
  <header class="titlebar">
    <svg class="i18"><use href="#nx"/></svg>
    <h1>莉智教育suger老师 - 建模 - [_model1.prt （修改的）&nbsp;]</h1>
    <div class="capsule">
      <i class="grip"></i><button>高清</button>
      <button aria-label="选区"><svg class="i18"><use href="#dash"/></svg></button>
      <button aria-label="画板"><i class="tile"></i></button>
      <button aria-label="换肤">Y</button><button>结束</button>
    </div>
    <strong class="brand">SIEMENS</strong>
    <div class="winbtns"><button aria-label="最小化">▂</button><button aria-label="最大化">□</button><button class="close" aria-label="关闭">✕</button></div>
  </header>

  <nav class="menubar">
    <svg class="i18"><use href="#nx"/></svg>
    <a href="#">文件(<u>F</u>)</a><a href="#">编辑(<u>E</u>)</a><a href="#">视图(<u>V</u>)</a><a href="#">插入(<u>S</u>)</a><a href="#">格式(<u>R</u>)</a><a href="#">工具(<u>T</u>)</a><a href="#">装配(<u>A</u>)</a><a href="#">信息(<u>I</u>)</a><a href="#">分析(<u>L</u>)</a><a href="#">首选项(<u>P</u>)</a><a href="#">窗口(<u>O</u>)</a><a href="#">GC工具箱</a><a href="#">燕秀UG模具2.1</a><a href="#">帮助(<u>H</u>)</a><a href="#">HB_MOULD <u>M</u>6.6</a>
    <div class="docbtns"><button aria-label="最小化">_</button><button aria-label="还原">❐</button><button aria-label="关闭">✖</button></div>
  </nav>

  <div class="toolbar" role="toolbar" aria-label="标准">
    <button class="start"><svg><use href="#nx"/></svg>开始</button><i class="dd"></i>
    <button><svg><use href="#new"/></svg></button><button><svg><use href="#open"/></svg></button><button><svg><use href="#save"/></svg></button><i class="sep"></i>
    <button><svg><use href="#cut"/></svg></button><button><svg><use href="#copy"/></svg></button><button><svg><use href="#paste"/></svg></button><i class="sep"></i>
    <button><svg><use href="#undo"/></svg></button><button><svg><use href="#redo"/></svg></button><i class="sep"></i>
    <button class="finder"><svg><use href="#find"/></svg>命令查找器</button><i class="sep"></i>
    <button><svg><use href="#info"/></svg></button><i class="dd low"></i><i class="sep"></i><i class="grip"></i>
    <button><svg><use href="#fit"/></svg></button><i class="dd"></i><button><svg><use href="#wire"/></svg></button><i class="dd"></i><button><svg><use href="#cube"/></svg></button><i class="dd"></i>
    <button class="on"><svg><use href="#shade"/></svg></button><button><svg><use href="#redbar"/></svg></button><button><svg><use href="#graycube"/></svg></button><i class="dd"></i><button><svg><use href="#frame"/></svg></button><i class="dd"></i><i class="sep"></i>
    <button><svg><use href="#sect"/></svg></button><button><svg><use href="#sect2"/></svg></button><i class="dd low"></i><i class="sep"></i><i class="grip"></i>
    <button><svg><use href="#layers"/></svg></button><button><svg><use href="#csys"/></svg></button><i class="dd"></i><i class="sep"></i>
    <button><svg><use href="#key"/></svg></button><button><svg><use href="#disp"/></svg></button><i class="dd"></i><i class="sep"></i>
    <button><svg><use href="#ruler"/></svg></button><button><svg><use href="#angle"/></svg></button><i class="dd low"></i><i class="sep"></i>
  </div>

  <div class="toolbar" role="toolbar" aria-label="特征">
    <button><svg><use href="#plane"/></svg></button><i class="dd"></i><button><svg><use href="#extr"/></svg></button><button><svg><use href="#rev"/></svg></button><button><svg><use href="#hole"/></svg></button><button><svg><use href="#face"/></svg></button><button><svg><use href="#thick"/></svg></button><i class="sep"></i>
    <button><svg><use href="#boss"/></svg></button><button><svg><use href="#pat"/></svg></button><button><svg><use href="#parr"/></svg></button><button><svg><use href="#unite"/></svg></button><i class="dd"></i><button><svg><use href="#box2"/></svg></button><button><svg><use href="#sheet"/></svg></button><button><svg><use href="#drft"/></svg></button><button><svg><use href="#slab"/></svg></button><button><svg><use href="#open2"/></svg></button><button><svg><use href="#move2"/></svg></button><i class="sep"></i>
    <button><svg><use href="#blend"/></svg></button><button><svg><use href="#curl"/></svg></button><button><svg><use href="#curl"/></svg></button><button><svg><use href="#chamf"/></svg></button><button><svg><use href="#pyr"/></svg></button><button><svg><use href="#gem"/></svg></button><i class="dd low"></i><i class="sep"></i><i class="grip"></i>
    <button><svg><use href="#d1"/></svg></button><i class="dd"></i><button><svg><use href="#d2"/></svg></button><i class="dd"></i><button><svg><use href="#d3"/></svg></button><button><svg><use href="#d4"/></svg></button><i class="dd"></i><button><svg><use href="#d5"/></svg></button><i class="dd"></i><button><svg><use href="#d6"/></svg></button><i class="dd"></i><button><svg><use href="#d7"/></svg></button><i class="dd low"></i><i class="sep"></i><i class="grip"></i>
    <button><svg><use href="#surf"/></svg></button><button><svg><use href="#surf2"/></svg></button><button><svg><use href="#tools"/></svg></button><button><svg><use href="#surf3"/></svg></button><button><svg><use href="#mesh"/></svg></button><button><svg><use href="#fold"/></svg></button><button><svg><use href="#flag"/></svg></button><button><svg><use href="#roll"/></svg></button><i class="dd low"></i><i class="sep"></i>
  </div>

  <div class="toolbar" role="toolbar" aria-label="燕秀工具">
    <button><svg><use href="#l1"/></svg></button><button><svg><use href="#l2"/></svg></button><button><svg><use href="#l3"/></svg></button><button><svg><use href="#l4"/></svg></button><button><svg><use href="#l5"/></svg></button><button><svg><use href="#l6"/></svg></button><i class="sep"></i>
    <button class="dot"><svg><use href="#l1"/></svg></button><button class="dot"><svg><use href="#l2"/></svg></button><button class="dot"><svg><use href="#l3"/></svg></button><button class="dot"><svg><use href="#l4"/></svg></button><button class="dot"><svg><use href="#l5"/></svg></button><button class="dot"><svg><use href="#l6"/></svg></button><i class="sep"></i>
    <button><svg><use href="#grid4"/></svg></button><button><svg><use href="#grid4"/></svg></button><button><svg><use href="#grid4"/></svg></button><i class="dd low"></i><i class="sep"></i><i class="grip"></i>
    <button><svg><use href="#steps"/></svg></button><button><svg><use href="#bulb"/></svg></button><button><svg><use href="#bulbl"/></svg></button><button><svg><use href="#bulb2"/></svg></button><button><svg><use href="#bulb3"/></svg></button><button><svg><use href="#bulb4"/></svg></button><button><svg><use href="#bulb5"/></svg></button><i class="sep"></i>
    <button><svg><use href="#first"/></svg></button><button><svg><use href="#last"/></svg></button><button><svg><use href="#pfirst"/></svg></button><button><svg><use href="#plast"/></svg></button><i class="sep"></i>
    <button><svg><use href="#order"/></svg></button><i class="sep"></i>
    <button><svg><use href="#dia1"/></svg></button><button><svg><use href="#dia2"/></svg></button><button><svg><use href="#dia3"/></svg></button><i class="dd low"></i><i class="sep"></i><i class="grip"></i>
    <button class="zi">字</button><button><svg><use href="#dimx"/></svg></button><button><svg><use href="#xbar"/></svg></button><button><svg><use href="#ybox"/></svg></button><button><svg><use href="#pal"/></svg></button><i class="sep"></i>
    <button><svg><use href="#rot"/></svg></button><button><svg><use href="#cc"/></svg></button><button><svg><use href="#cr"/></svg></button><button><svg><use href="#cross"/></svg></button><button><svg><use href="#axes"/></svg></button><i class="sep"></i>
    <button><svg><use href="#ring"/></svg></button><span class="more">»<i class="dd"></i></span>
  </div>

  <div class="selbar" role="toolbar" aria-label="选择">
    <span class="combo off first"><select aria-label="类型过滤器" disabled><option></option></select></span>
    <span class="combo scope"><select aria-label="选择范围"><option>整个装配</option></select></span>
    <button><svg><use href="#gwrench"/></svg></button><i class="sep"></i><button><svg><use href="#snapx"/></svg></button><i class="dd"></i><button><svg><use href="#back"/></svg></button><button><svg><use href="#house"/></svg></button><button><svg><use href="#gtool"/></svg></button><button><svg><use href="#gham"/></svg></button><i class="sep"></i><button><svg><use href="#dash"/></svg></button><i class="dd"></i><i class="sep"></i>
    <span class="combo off scope spaced"><select aria-label="面规则" disabled><option>单个面</option></select></span>
    <span class="combo off scope"><select aria-label="曲线规则" disabled><option>相切曲线</option></select></span>
    <button><svg><use href="#hh"/></svg></button><button><svg><use href="#hh"/></svg></button><button><svg><use href="#stamp"/></svg></button><button><svg><use href="#gdown"/></svg></button><i class="sep"></i>
    <button class="on"><svg><use href="#flow"/></svg></button><button class="on"><svg><use href="#seg"/></svg></button><button class="on"><svg><use href="#mid"/></svg></button><button><svg><use href="#scurve"/></svg></button><button><svg><use href="#tee"/></svg></button><button class="on"><svg><use href="#ccen"/></svg></button><button><svg><use href="#cq"/></svg></button><button class="on"><svg><use href="#plus"/></svg></button><button><svg><use href="#mid"/></svg></button><button><svg><use href="#psurf"/></svg></button><i class="sep"></i><button class="on"><svg><use href="#pcube"/></svg></button>
    <i class="dd low end"></i>
  </div>

  <div class="prompt">
    <p class="cue">更改文本，更改字体或变换文本</p>
    <p class="status">圆弧中心 - 边 / 体(1)</p>
    <i class="cell"></i><i class="cell wide"></i>
    <button aria-label="对话框"><svg class="i18"><use href="#gbox"/></svg></button><button aria-label="全屏"><svg class="i18"><use href="#full"/></svg></button>
  </div>

  <main class="work">
    <nav class="rail" aria-label="资源条">
      <button><svg><use href="#t1"/></svg></button><button class="active"><svg><use href="#t2"/></svg></button><button><svg><use href="#t3"/></svg></button><button class="apart"><svg><use href="#t4"/></svg></button><button class="apart"><svg><use href="#t5"/></svg></button><button class="apart"><svg><use href="#t6"/></svg></button><button><svg><use href="#t7"/></svg></button><button><svg><use href="#t8"/></svg></button><button><svg><use href="#t9"/></svg></button><button><svg><use href="#t10"/></svg></button><button><svg><use href="#t11"/></svg></button>
    </nav>
    <aside class="nav-panel">
      <h2><svg><use href="#pin"/></svg>部件导航器</h2>
      <div class="tree">
        <div class="tree-head">名称 <span>▲</span></div>
        <ul>
          <li><label><input type="checkbox" checked><svg><use href="#body"/></svg>体 (1)</label></li>
          <li><label><input type="checkbox" checked><svg><use href="#body"/></svg>体 (2)</label></li>
          <li><label><input type="checkbox" checked><svg><use href="#body"/></svg>体 (3)</label></li>
          <li><label><input type="checkbox" checked><svg><use href="#body"/></svg>体 (4)</label></li>
          <li><label><input type="checkbox" checked><svg><use href="#body"/></svg>体 (5)</label></li>
          <li><label><input type="checkbox" checked><svg><use href="#body"/></svg>体 (6)</label></li>
          <li><label><input type="checkbox" checked><svg><use href="#body"/></svg>体 (7)</label></li>
          <li><label><input type="checkbox" checked><svg><use href="#body"/></svg>体 (8)</label></li>
          <li><label><input type="checkbox" checked><svg><use href="#body"/></svg>体 (9)</label></li>
          <li><label><input type="checkbox" checked><svg><use href="#body"/></svg>体 (10)</label></li>
          <li><label><input type="checkbox" checked><svg><use href="#body"/></svg>体 (11)</label></li>
          <li><label><input type="checkbox" checked><svg><use href="#body"/></svg>体 (12)</label></li>
          <li><label><input type="checkbox" checked><svg><use href="#region"/></svg>偏置区域 (13)</label></li>
          <li><label><input type="checkbox" checked><svg><use href="#line"/></svg>直线 (14)</label></li>
          <li><label><input type="checkbox" checked><svg><use href="#line"/></svg>直线 (15)</label></li>
          <li><label><input type="checkbox" checked><svg><use href="#line"/></svg>直线 (16)</label></li>
          <li><label><input type="checkbox" checked><svg><use href="#line"/></svg>直线 (17)</label></li>
          <li><label><input type="checkbox" checked><svg><use href="#line"/></svg>直线 (18)</label></li>
          <li><label><input type="checkbox" checked><svg><use href="#line"/></svg>直线 (19)</label></li>
          <li><label><input type="checkbox" checked><svg><use href="#line"/></svg>直线 (20)</label></li>
          <li><label><input type="checkbox" checked><svg><use href="#line"/></svg>直线 (21)</label></li>
          <li><label><input type="checkbox" checked><svg><use href="#line"/></svg>直线 (22)</label></li>
          <li><label><input type="checkbox" checked><svg><use href="#line"/></svg>直线 (23)</label></li>
          <li><label><input type="checkbox" checked><svg><use href="#line"/></svg>直线 (24)</label></li>
          <li><label><input type="checkbox" checked><svg><use href="#body"/></svg>体 (25)</label></li>
          <li><label><input type="checkbox" checked><svg><use href="#body"/></svg>体 (26)</label></li>
        </ul>
      </div>
    </aside>

    <section class="viewport" aria-label="图形窗口">
      <svg class="scene" viewBox="476 220 1190 834" preserveAspectRatio="xMinYMin slice">
        <defs>
          <linearGradient id="sky" x1="0" y1="0" x2="0" y2="1"><stop offset="0" stop-color="#b7b8ba"/><stop offset=".5" stop-color="#d3d4d6"/><stop offset="1" stop-color="#e7e8ea"/></linearGradient>
          <linearGradient id="green" gradientUnits="userSpaceOnUse" x1="932" y1="0" x2="1527" y2="0"><stop offset="0" stop-color="#456d3c"/><stop offset=".2" stop-color="#4a7342"/><stop offset=".5" stop-color="#588c54"/><stop offset=".8" stop-color="#5d9359"/><stop offset="1" stop-color="#56874f"/></linearGradient>
          <linearGradient id="disc" gradientUnits="userSpaceOnUse" x1="954" y1="0" x2="1527" y2="0"><stop offset="0" stop-color="#4a6f45"/><stop offset=".5" stop-color="#528355"/><stop offset="1" stop-color="#588c55"/></linearGradient>
          <linearGradient id="orange" gradientUnits="userSpaceOnUse" x1="700" y1="0" x2="921" y2="0"><stop offset="0" stop-color="#ff9e00"/><stop offset=".7" stop-color="#ff9500"/><stop offset="1" stop-color="#fb8500"/></linearGradient>
          <linearGradient id="violet" gradientUnits="userSpaceOnUse" x1="880" y1="400" x2="1000" y2="520"><stop offset="0" stop-color="#5643b8"/><stop offset="1" stop-color="#4f3eac"/></linearGradient>
          <path id="engraving" d="M1115 537H1078L1073 545 1065 574 1069 586 1092 579M1111 521L1120 543 1133 557M1113 551L1097 564M1134 535L1118 583M1171 532L1150 583M1134 535L1171 532M1128 556L1162 555M1121 579L1150 577M1160 518L1158 533M1262 526H1208L1202 540 1190 573 1195 583 1216 577M1232 527L1230 548 1238 570 1254 581M1290 516L1280 545 1270 568 1244 556M1250 535L1302 539M1326 520L1309 578M1371 517L1348 578M1326 520L1371 518M1320 536L1365 535M1315 554L1359 553M1311 573L1350 572M1370 531L1423 530M1407 511L1379 577M1397 534L1411 566M1390 540L1371 554M1475 514L1445 528H1516M1494 507L1468 555 1450 570 1424 575M1439 541L1518 536M1446 549L1468 562 1498 571"/>
        </defs>
        <path d="M476 220h1190v834H476z" fill="url(#sky)"/>
        <path d="M932 220H1508L1527 667C1500 702 1360 719 1195 720 1060 719 970 712 954 692Z" fill="url(#green)" stroke="#8c948c"/>
        <path d="M954 692C975 662 1130 637 1310 637 1450 638 1524 652 1527 667 1500 702 1360 719 1195 720 1060 719 970 712 954 692Z" fill="url(#disc)"/>
        <path d="M1051 220V700" stroke="#a39a7c"/>
        <g transform="matrix(287 -13 0 41 1240 679)"><circle r="1" class="rim"/><circle r="1" class="rim-hi"/></g>
        <g stroke="#3b3280" stroke-linejoin="round">
          <path d="M941 220H1003Q1012 250 1030 286 1042 310 1042 327 1040 352 988 370L938 308 926 294Z" fill="#4c3ea0"/>
          <path d="M1003 220H1030L1051 277Q1072 318 1073 337 1070 349 1051 357 980 395 880 395H852Q930 389 988 370 1042 350 1042 327 1041 309 1030 286 1012 250 1003 220Z" fill="#7a62fd"/>
          <path d="M880 395Q980 395 1051 357 1072 348 1073 335L1074 350Q1068 368 1050 376 960 412 880 413Z" fill="#5f4fc8"/>
          <path d="M880 413Q960 412 1050 376 1070 368 1074 350L1071 385 1066 430Q1062 445 1048 453L960 511 843 590 860 505 878 430Z" fill="url(#violet)"/>
          <path d="M851 395H880V413L878 430 860 505 806 592Z" fill="#7361ea"/>
          <path d="M806 592L860 505 843 590Z" fill="#6552d6"/>
          <path d="M1035 385L1030 463" fill="none" opacity=".5"/>
        </g>
        <path d="M1051 277V451" stroke="#c8b9e8"/>
        <path d="M1062 383l-5 24 5 8-6 14M1068 386l-5 27 2 14M1062 383l5 5 4-6M1056 400l10 5" fill="none" stroke="#fb4fd6" stroke-width="5"/>

        <use href="#engraving" class="curve-out"/>
        <path d="M1512 520l18 14-3-26 18 22-10 4-24-4M1495 542l40 8 5-5-17-13M1488 560l46-3-4 9z" class="overhang"/>
        <use href="#engraving" class="curve-in"/>

        <text x="1203" y="634" class="engrave">S<tspan class="dark">u</tspan>ge<tspan class="dark">r</tspan></text>
        <path d="M1202 582L1208 716M1288 578L1293 718M1247 612L1250 680" stroke="#8d6a2c" fill="none"/>
        <path d="M1199 592l3-12 4 12zM1285 590l3-12 4 12z" fill="#c78a2a"/>
        <path d="M803 714H1666M1051 740V1054" stroke="#333"/>
        <path d="M1239 718q11 12 23 0M1245 718q5 6 10 0M1262 721l30 5" fill="none" stroke="#8a7d55" stroke-width="1.500"/>
        <path d="M1240 675l4 4-4 4-4-4z" fill="#2020c0" stroke="#fff"/>
        <path d="M700 712C830 708 904 738 909 771L921 1054H476V712Z" fill="url(#orange)" stroke="#9a6a2a"/>
        <path d="M700 712C830 708 904 738 908 768 900 796 850 812 790 822H700Z" fill="#ffab08"/>
        <path d="M908 770C900 798 850 814 790 824M909 774C900 802 850 818 790 828" fill="none" stroke="#7d4a5e" stroke-width="1.500"/>
        <path d="M1022 714a30 31 0 0 1 60 0z" fill="#6fa0dc"/><path d="M1026 708a27 26 0 0 1 52 0" fill="none" stroke="#3f78bd" stroke-width="4"/>
        <path d="M1022 714a30 31 0 0 0 60 0z" fill="#f5d94e"/><path d="M1026 722a27 23 0 0 0 52 0" fill="none" stroke="#efc30e" stroke-width="4"/>
        <circle cx="1052" cy="715" r="8" fill="#f23c5b"/>
        <path d="M1052 699v6M1052 725v6M1036 715h6M1062 715h6M1048 704l4 4 4-4zM1048 726l4-4 4 4zM1041 711l4 4-4 4zM1063 711l-4 4 4 4z" class="cursor-b"/>
        <path d="M1052 699v6M1052 725v6M1036 715h6M1062 715h6M1048 704l4 4 4-4zM1048 726l4-4 4 4zM1041 711l4 4-4 4zM1063 711l-4 4 4 4z" class="cursor-w"/>
        <circle cx="1077" cy="723" r="6" fill="#f4dc6b" stroke="#333"/><path d="M1077 721v4M1071 730h13" stroke="#333"/>
      </svg>
      <span class="tag">截面</span>
      <form class="dims">
        <label for="len">长度</label><span class="unit"><input id="len" value="7.479982"><b>mm</b><button type="button" aria-label="长度选项">🡇</button></span>
        <label for="hei">高度</label><span class="unit"><input id="hei" value="4.5"><b>mm</b><button type="button" aria-label="高度选项">🡇</button></span>
        <label for="wr">W 比例</label><input id="wr" class="ratio" value="47.12095">
      </form>
    </section>

    <aside class="right-rail">
      <i class="hgrip"></i>
      <button><svg><use href="#r1"/></svg></button><button><svg><use href="#r2"/></svg></button><button><svg><use href="#r3"/></svg></button><button><svg><use href="#r4"/></svg></button><i class="left-arrow"></i>
    </aside>

    <form class="dialog" aria-label="文本">
      <div class="dlg-title">文本<span><button type="button" aria-label="重置">↺</button><button type="button" aria-label="折叠">━</button><button type="button" class="close" aria-label="关闭">✕</button></span></div>
      <div class="dlg-main">
        <h3>类型<i class="chev"></i></h3>
        <div class="sec wide-sec"><span class="combo big"><svg><use href="#surf"/></svg><select aria-label="类型"><option>在面上</option></select></span></div>
        <h3>文本放置面<i class="chev"></i></h3>
        <div class="sec wide-sec"><div class="row tall"><span class="pick"><svg><use href="#tick"/></svg>选择对象 (1)</span><button type="button" class="sq" aria-label="面"><svg><use href="#facebtn"/></svg></button></div></div>
        <h3>面上的位置<i class="chev"></i></h3>
        <div class="sec"><div class="row"><label for="pm">放置方法</label><span class="combo half"><select id="pm"><option>面上的曲线</option></select></span></div>
          <div class="row tall"><span class="pick"><svg><use href="#tick"/></svg>选择曲线 (1)</span><button type="button" class="sq" aria-label="曲线"><svg><use href="#curvebtn"/></svg></button></div></div>
        <h3>文本属性<i class="chev"></i></h3>
        <div class="sec props">
          <div class="row input-row"><input class="name" aria-label="文本" value="Suger"><button type="button" class="mini" aria-label="表达式"><i></i></button></div>
          <label class="check"><input type="checkbox">参考文本</label>
          <div class="row"><label for="fn">字体</label><span class="combo half"><select id="fn"><option>黑体</option></select></span></div>
          <div class="row"><label for="sc">脚本</label><span class="combo half"><select id="sc"><option>西方的</option></select></span></div>
          <div class="row"><label for="fs">字体样式</label><span class="combo half"><select id="fs"><option>常规</option></select></span></div>
          <label class="check"><input type="checkbox" checked><em>A|V</em>使用字距调整</label>
        </div>
        <h3>文本框<i class="chev"></i></h3>
        <div class="sec frame-sec">
          <div class="row"><label for="an">锚点位置</label><span class="combo half"><select id="an"><option>中心</option></select></span></div>
          <div class="row input-row"><label for="pa">参数 (%)</label><input id="pa" class="num" value="50"></div>
          <h4>尺寸<i class="chev down"></i></h4>
        </div>
        <h3>设置<i class="chev down"></i></h3>
        <div class="dlg-foot"><button type="button" aria-label="应用"></button><button type="button">取消</button></div>
      </div>
    </form>
  </main>

  <footer class="toolbar bottom" role="toolbar" aria-label="草图">
    <span class="clock">03:20:47</span>
    <button><svg><use href="#steps"/></svg></button><i class="dd"></i><button><svg><use href="#ybox"/></svg></button><button><svg><use href="#dimx"/></svg></button><button><svg><use href="#tools"/></svg></button><button><svg><use href="#t1"/></svg></button><i class="sep"></i><button><svg><use href="#parr"/></svg></button><button><svg><use href="#d5"/></svg></button><button><svg><use href="#disp"/></svg></button><i class="sep"></i><button><svg><use href="#open"/></svg></button><button><svg><use href="#layers"/></svg></button><button><svg><use href="#box2"/></svg></button><i class="dd"></i><i class="sep"></i><i class="grip"></i>
    <button><svg><use href="#sk"/></svg></button><button class="done"><svg><use href="#gbox"/></svg>完成草图</button>
    <button><svg><use href="#s1"/></svg></button><button><svg><use href="#s2"/></svg></button><button><svg><use href="#s3"/></svg></button><button><svg><use href="#s4"/></svg></button><button><svg><use href="#s5"/></svg></button><button><svg><use href="#s5"/></svg></button><button><svg><use href="#s6"/></svg></button><button><svg><use href="#s7"/></svg></button><button><svg><use href="#plus"/></svg></button><button><svg><use href="#s8"/></svg></button><i class="dd"></i><i class="sep"></i>
    <button><svg><use href="#s9"/></svg></button><button><svg><use href="#s9"/></svg></button><button><svg><use href="#s11"/></svg></button><i class="sep"></i>
    <button><svg><use href="#s10"/></svg></button><i class="dd"></i><i class="sep"></i>
    <button><svg><use href="#s11"/></svg></button><button><svg><use href="#s12"/></svg></button><button><svg><use href="#s11"/></svg></button><i class="dd"></i><i class="sep"></i>
    <button><svg><use href="#s13"/></svg></button><i class="sep"></i>
  </footer>
</div>

<div class="banner">
  <p>更多免费模具视频学习资料，</p>
  <p><b>UG</b> 安装包,汽车摸，模流分析</p>
  <p>加老师 <b>QQ:2289522854</b> 咨询</p>
</div>
</body>
</html>
```
FILE: styles.css
```css
* { box-sizing: border-box; }
body { margin: 0; background: #000; color: #111; font: 13px/16px "Noto Sans", "Noto Sans CJK SC", sans-serif; overflow: hidden; }
h1, h2, h3, h4, p, ul { margin: 0; padding: 0; font: inherit; list-style: none; }
button, input, select { font: inherit; color: inherit; margin: 0; }
button { padding: 0; border: 0; background: none; display: flex; align-items: center; justify-content: center; flex: none; }
i, em { font-style: normal; }
svg { flex: none; overflow: visible; }
.sprite { position: absolute; width: 0; height: 0; }
.i18 { width: 18px; height: 18px; }

/* icon strokes */
.o { fill: none; stroke: #cf8a45; stroke-width: 1.5; }
.b { fill: none; stroke: #3b7fc4; stroke-width: 1.5; }
.bk { fill: none; stroke: #24418c; }
.k { fill: none; stroke: #333; }
.g { fill: none; stroke: #8a8a8a; }
.m { fill: none; stroke: #b03060; stroke-width: 1.5; }
.y { fill: none; stroke: #e9c84a; stroke-width: 2; }
.w2 { stroke-width: 2; }
.fb { fill: #1f66b4; }
.fo { fill: #c87a35; }

.app { margin: 1px 219px 4px; height: calc(100vh - 5px); display: flex; flex-direction: column; overflow: hidden; background: #ddd; }

.titlebar { flex: none; height: 23px; background: #1c1c1c; color: #eee; display: flex; align-items: flex-start; line-height: 12px; overflow: hidden; }
.titlebar > svg { margin: -8px 4px 0 -8px; }
.titlebar h1 { white-space: nowrap; }
.capsule { margin: -4px 184px 0 auto; height: 22px; display: flex; align-items: center; background: #e3e3e3; border-radius: 0 0 4px 4px; color: #999; }
.capsule button { width: 49px; height: 22px; border-left: 1px solid #f8f8f8; }
.capsule .grip { height: 18px; margin: 0 2px; }
.tile { width: 17px; height: 17px; border: 1px solid #999; border-radius: 2px; }
.brand { color: #fff; font: 900 13px/10px "Open Sans", sans-serif; width: 96px; }
.winbtns { display: flex; gap: 5px; }
.winbtns button { width: 19px; height: 15px; background: linear-gradient(#888, #444); color: #fff; border-radius: 0 0 3px 3px; font-size: 11px; }
.winbtns .close { width: 17px; background: #f07238; }

.menubar { flex: none; height: 27px; display: flex; align-items: center; gap: 13px; background: linear-gradient(#e2e2e2, #ededed); border-bottom: 1px solid #c8c8c8; white-space: nowrap; }
.menubar > svg { margin: 0 -6px 0 -4px; }
.menubar a { color: #111; text-decoration: none; }
.docbtns { margin-left: auto; display: flex; gap: 3px; padding-right: 2px; }
.docbtns button { width: 18px; height: 18px; border: 1px solid #888; border-radius: 3px; background: #f3f3f3; color: #555; font-size: 11px; }

.toolbar { flex: none; height: 37px; display: flex; align-items: center; background: linear-gradient(#e4e4e4, #cfcfcf); border-top: 1px solid #f6f6f6; white-space: nowrap; }
.toolbar button { width: 33px; height: 32px; }
.toolbar button.start { width: 56px; gap: 5px; padding-right: 1px; }
.toolbar button.finder { width: 103px; gap: 6px; }
.toolbar svg { width: 25px; height: 25px; }
.toolbar .on { background: #fff; border: 1px solid #555; border-radius: 3px; }
.dd { flex: none; width: 13px; height: 32px; display: flex; align-items: center; justify-content: center; }
.dd::before { content: ""; border: 3px solid transparent; border-top: 4px solid #111; border-bottom: 0; }
.dd.low { align-items: flex-end; padding-bottom: 4px; }
.sep { flex: none; width: 7px; height: 35px; background: linear-gradient(90deg, transparent 3px, #b5b5b5 3px, #b5b5b5 4px, #f4f4f4 4px, #f4f4f4 5px, transparent 5px); }
.grip { flex: none; width: 6px; height: 28px; background: repeating-linear-gradient(#999 0 2px, transparent 2px 4px) 2px 0 / 2px 100% no-repeat; }
.dot { background: linear-gradient(#fff, #fff) 4px 5px / 6px 6px no-repeat; }
.toolbar .zi { color: #3b7fc4; font-size: 24px; line-height: 28px; }
.more { margin-left: auto; width: 12px; line-height: 12px; font-weight: bold; font-size: 15px; }
.more .dd { width: 12px; height: 16px; }

.selbar { flex: none; height: 32px; display: flex; align-items: center; background: linear-gradient(#c9c9c9, #dedede 30%, #d2d2d2); border-top: 2px solid #a2a2a2; }
.selbar button { width: 25px; height: 24px; }
.selbar button svg { width: 18px; height: 18px; }
.selbar .on { background: #fff; border: 1px solid #666; border-radius: 3px; }
.selbar .sep { height: 28px; }
.selbar .dd { width: 11px; }
.selbar .end { margin-left: auto; }

.combo { position: relative; display: flex; align-items: center; height: 23px; background: #fff; border: 1px solid #777; border-radius: 4px; flex: none; }
.combo select { appearance: none; border: 0; background: none; width: 100%; height: 100%; padding: 0 20px 0 4px; opacity: 1; }
.combo::before { content: ""; position: absolute; right: 0; top: 0; bottom: 0; width: 17px; background: linear-gradient(#cfe3fa, #5d9ade); border-radius: 0 3px 3px 0; }
.combo::after { content: ""; position: absolute; right: 3px; top: 8px; border: 5px solid transparent; border-top: 6px solid #0b1f3d; border-bottom: 0; }
.combo.off { background: #d4d4d4; border-color: #aaa; color: #888; }
.combo.off::before { background: #e8e8e8; }
.combo.off::after { border-top-color: #999; }
.selbar .combo { height: 21px; margin-right: 5px; }
.selbar .combo.spaced, .selbar .combo.first { margin-right: 9px; }
.selbar .first { width: 149px; border-left: 0; border-radius: 0 4px 4px 0; }
.selbar .scope { width: 162px; }
.combo.half { width: 137px; }
.combo.big { height: 26px; }
.combo.big svg { width: 17px; height: 17px; margin: 0 0 0 4px; opacity: .6; }

.prompt { flex: none; height: 24px; display: flex; align-items: center; background: linear-gradient(#e4e4e4, #d6d6d6); border-top: 1px solid #f4f4f4; font-size: 14px; font-weight: bold; }
.cue { width: 684px; text-indent: -6px; overflow: hidden; white-space: nowrap; }
.status { flex: 1; border-left: 1px solid #f6f6f6; padding-left: 2px; line-height: 22px; white-space: nowrap; font-size: 14px; }
.cell { width: 22px; height: 22px; border-left: 1px solid #f6f6f6; }
.cell.wide { width: 40px; border-right: 1px solid #f6f6f6; }
.prompt button { width: 22px; }

.work { flex: 1; min-height: 0; display: flex; position: relative; border-top: 2px solid #777; }
.rail { flex: none; width: 25px; padding-top: 18px; background: #a3a3a3; border-right: 1px solid #8a8a8a; overflow: hidden; }
.rail button { width: 25px; height: 45px; background: #d6d6d6; border: 1px solid #777; border-left: 0; justify-content: flex-start; }
.rail .active { background: #eaeaea; border-color: #eaeaea; }
.rail .apart { margin-top: 13px; }
.rail svg { width: 22px; height: 24px; }
.nav-panel { flex: none; width: 232px; padding-left: 10px; background: #eaeaea; overflow: hidden; display: flex; flex-direction: column; }
.nav-panel h2 { height: 38px; display: flex; align-items: center; font-size: 14px; font-weight: bold; gap: 14px; padding: 4px 0 0 6px; }
.nav-panel h2 svg { width: 12px; height: 12px; }
.tree { flex: 1; background: #fff; border-left: 1px solid #888; border-top: 1px solid #888; }
.tree-head { height: 21px; padding-left: 7px; line-height: 21px; background: linear-gradient(#f4f4f4, #d2d2d2); border-bottom: 1px solid #999; }
.tree-head span { margin-left: 14px; font-size: 12px; }
.tree li { height: 21px; border-bottom: 1px solid #dcdcdc; border-right: 1px solid #dcdcdc; margin-right: 4px; background: linear-gradient(90deg, transparent 30px, #aaa 30px, #aaa 31px, transparent 31px); }
.tree li:nth-child(odd) { height: 22px; background-color: #f5f5f5; }
.tree label { display: flex; align-items: center; gap: 2px; height: 20px; margin-left: 31px; color: #333; white-space: nowrap; }
.tree label::before { content: ""; width: 9px; border-top: 1px dotted #999; }
.tree label svg { width: 17px; height: 17px; margin-right: 1px; }
.tree input { appearance: none; width: 14px; height: 14px; border: 1px solid #333; background: #f8fff8 url("data:image/svg+xml,%3Csvg xmlns='http://www.w3.org/2000/svg' viewBox='0 0 12 12'%3E%3Cpath d='M1 5l3 0 1 2 5-6 2 1-6 9-2 0z' fill='%23228a42'/%3E%3C/svg%3E"); }

.viewport { flex: 1; position: relative; min-width: 0; overflow: hidden; }
.scene { display: block; width: 100%; height: 100%; }
.rim, .rim-hi { fill: none; stroke: #d49a20; stroke-width: 5; vector-effect: non-scaling-stroke; }
.rim-hi { stroke: #f6cf4f; stroke-width: 3; }
.curve-out, .curve-in { fill: none; stroke: #d95fd0; stroke-width: 6; }
.curve-in { stroke: #7c9273; stroke-width: 3; }
.overhang { fill: #fbd0f6; stroke: #c45abc; stroke-width: 2; }
.engrave { font: 32px "Liberation Sans", sans-serif; fill: #5f9a5c; stroke: #de6fd4; stroke-width: 2px; }
.engrave .dark { stroke: #0d6a22; }
.cursor-b { fill: none; stroke: #222; stroke-width: 4; }
.cursor-w { fill: #fff; stroke: #fff; stroke-width: 2; }
.tag { position: absolute; left: 766px; top: 465px; width: 34px; height: 28px; background: linear-gradient(#f2f2f2, #cfcfcf); border: 1px solid #aaa; border-radius: 3px; text-align: center; line-height: 27px; }
.dims { position: absolute; left: 815px; top: 467px; width: 168px; padding: 4px 5px 5px; display: grid; grid-template-columns: 26px 1fr; gap: 2px 3px; align-items: center; background: linear-gradient(#e6e6e6, #bcbcbc); border: 1px solid #aaa; border-radius: 4px; box-shadow: 1px 1px 1px #777; }
.dims label { white-space: nowrap; }
.unit { display: flex; align-items: center; height: 22px; background: #d9d9d9; border: 1px solid #888; border-radius: 3px; overflow: hidden; }
.unit input { width: 66px; height: 20px; border: 0; padding: 0 0 0 4px; background: #fff; }
.unit b { flex: 1; font-weight: normal; padding-left: 5px; }
.unit button { width: 17px; height: 20px; background: linear-gradient(#bcd8f6, #5e9ade); font-size: 14px; }
.ratio { justify-self: end; width: 69px; height: 22px; border: 1px solid #888; border-radius: 3px; padding: 0 0 0 5px; }

.right-rail { flex: none; width: 35px; background: #e7e7e7; border-left: 1px solid #fafafa; padding-top: 74px; }
.right-rail button { width: 34px; height: 33px; padding-left: 3px; }
.right-rail svg { width: 24px; height: 24px; }
.hgrip { display: block; height: 3px; width: 25px; margin: 0 0 3px 8px; background: repeating-linear-gradient(90deg, #999 0 2px, transparent 2px 4px); }
.left-arrow { display: block; width: 0; margin: 3px 0 0 8px; border: 4px solid transparent; border-right-color: #111; border-left: 0; }

.dialog { position: absolute; left: 257px; top: 0; width: 327px; background: #e8e8e8; border-bottom: 9px solid #1a1a1a; border-radius: 6px 6px 5px 5px; overflow: hidden; }
.dlg-title { height: 25px; padding: 0 4px 0 8px; display: flex; align-items: center; justify-content: space-between; background: linear-gradient(#666, #1d1d1d 45%); color: #e8e8e8; }
.dlg-title span { display: flex; gap: 4px; }
.dlg-title button { width: 19px; height: 19px; border-radius: 3px; background: #555; color: #fff; font-size: 13px; font-weight: bold; }
.dlg-title .close { background: #ee7440; }
.dlg-main { padding: 5px 6px 6px; border: solid #c8c8c8; border-width: 0 1px; }
.dlg-main h3 { height: 24px; display: flex; align-items: center; justify-content: space-between; padding-left: 5px; font-size: 14px; font-weight: bold; background: linear-gradient(#fafafa, #d6d6d6); border-bottom: 1px solid #888; }
.chev { width: 24px; height: 22px; display: flex; align-items: center; justify-content: center; border-left: 1px solid #fff; }
.chev::before { content: ""; width: 8px; height: 8px; border: solid #666; border-width: 3px 0 0 3px; transform: translateY(2px) rotate(45deg); }
.chev.down::before { transform: translateY(-2px) rotate(225deg); }
.sec { display: flex; flex-direction: column; padding: 8px 9px 12px 7px; background: #d1d1d1; border: solid #b4b4b4; border-width: 0 1px; gap: 4px; }
.sec.wide-sec { padding: 8px 9px 11px 8px; }
.sec.props { padding: 7px 9px 11px 7px; gap: 5px; }
.sec.frame-sec { padding-bottom: 10px; }
.row { display: flex; align-items: center; justify-content: space-between; height: 23px; }
.row.tall { height: 32px; }
.row.input-row { height: 21px; }
.pick { display: flex; align-items: center; gap: 7px; padding-left: 2px; }
.pick svg { width: 13px; height: 13px; }
.sq { width: 32px; height: 32px; border: 1px solid #777; border-radius: 3px; background: linear-gradient(#f8f8f8, #c8c8c8); box-shadow: inset 0 0 0 1px #fff; }
.sq svg { width: 24px; height: 24px; }
.name { width: 265px; height: 21px; border: 1px solid #777; border-radius: 4px; padding: 0 4px; font: 14px "Liberation Mono", monospace; }
.mini { width: 22px; height: 22px; border: 1px solid #aaa; border-radius: 3px; background: #eee; }
.mini i { width: 14px; height: 14px; background: #a5a5a5; }
.check { display: flex; align-items: center; gap: 3px; height: 17px; }
.check input { appearance: none; width: 17px; height: 17px; border: 1px solid #777; background: linear-gradient(#f4f4f4, #c4c4c4); }
.check input:checked { background: #8fc4f6 url("data:image/svg+xml,%3Csvg xmlns='http://www.w3.org/2000/svg' viewBox='0 0 15 15'%3E%3Cpath d='M3 6l4 4 5-7' fill='none' stroke='%230c3a78' stroke-width='3'/%3E%3C/svg%3E"); }
.check em { color: #223399; font-size: 11px; margin: 0 0 0 3px; }
.num { width: 77px; height: 21px; border: 1px solid #777; border-radius: 4px; padding: 0 4px; }
h4 { height: 24px; display: flex; align-items: center; justify-content: space-between; padding-left: 9px; font-size: 14px; font-weight: bold; background: linear-gradient(#bbb, #c6c6c6); border: 1px solid #999; }
h4 .chev { border: 0; }
.dlg-foot { display: flex; justify-content: flex-end; gap: 7px; margin-top: 4px; padding: 5px 10px 0 0; border-top: 1px solid #aaa; }
.dlg-foot button { width: 56px; height: 24px; border: 1px solid #777; border-radius: 4px; background: linear-gradient(#fafafa, #ddd 45%, #bbb 50%, #e8e8e8); }

.toolbar.bottom { height: 23px; align-items: flex-start; overflow: hidden; border-top: 2px solid #f4f4f4; }
.bottom .sep { height: 22px; }
.clock { flex: none; width: 92px; margin: 0 0 0 3px; height: 22px; border-radius: 4px; background: #2c2c2c; color: #ddd; text-align: center; line-height: 18px; }
.toolbar .done { width: 98px; color: #999; justify-content: flex-start; gap: 4px; padding-left: 4px; }

.banner { position: absolute; left: 14px; bottom: 11px; width: 695px; height: 232px; padding: 16px 73px; background: #fff; color: #f00; font: bold 44px/56px "Noto Sans CJK SC", sans-serif; white-space: nowrap; overflow: hidden; box-shadow: 1px 1px 1px #666; }
.banner b { font: bold 38px/50px Lato, sans-serif; padding: 0 3px; }
```
